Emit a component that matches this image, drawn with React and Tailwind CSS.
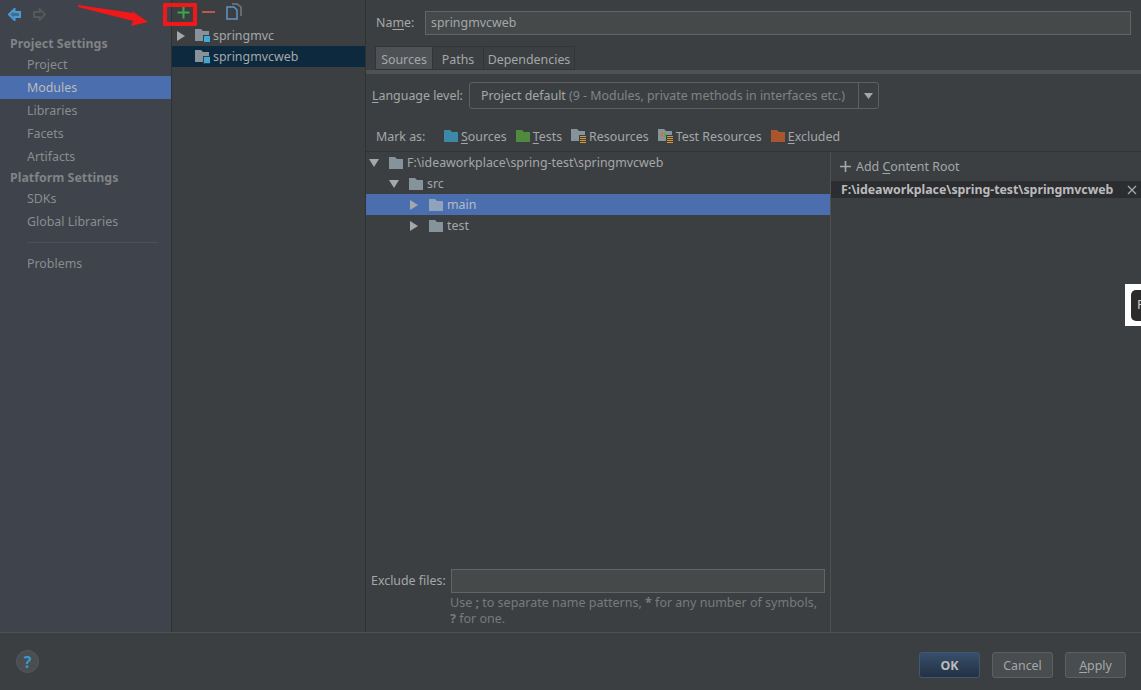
import React from "react";

const font = { fontFamily: '"Noto Sans", "Open Sans", sans-serif' };

function Folder({ color = "#87939a", className = "" }) {
  return (
    <svg width="14" height="12" viewBox="0 0 14 12" className={className}>
      <path d="M0 0h6l2 2h6v10H0z" fill={color} />
    </svg>
  );
}

function ModuleFolder() {
  return (
    <svg width="15" height="14" viewBox="0 0 15 14" className="shrink-0">
      <path d="M0 0h6l2 2h6v10H0z" fill="#87939a" />
      <rect x="8" y="6" width="7" height="8" fill="#3c3f41" />
      <rect x="9" y="7" width="6" height="6" fill="#40a8d8" />
    </svg>
  );
}

function Tri({ down = false, className = "" }) {
  return (
    <svg width="10" height="10" viewBox="0 0 10 10" className={`shrink-0 ${className}`}>
      {down ? <path d="M0 1h10L5 9z" fill="#a3a8ab" /> : <path d="M1 0l8 5-8 5z" fill="#a3a8ab" />}
    </svg>
  );
}

function ResFolder({ test = false }) {
  return (
    <svg width="15" height="14" viewBox="0 0 15 14" className="shrink-0">
      <path d="M0 0h6l2 2h6v10H0z" fill="#87939a" />
      {test && <path d="M2 5l3-2v6z" fill="#d9702f" />}
      {test && <path d="M6 3l3 3-3 3z" fill="#59a84a" />}
      <rect x="8" y="6" width="7" height="8" fill="#3c3f41" />
      <path d="M9 7.5h6M9 9.5h6M9 11.5h6M9 13.5h6" stroke="#d59b3b" strokeWidth="1" />
    </svg>
  );
}

function NavItem({ label, active }) {
  return (
    <div className={`h-[23px] pl-[27px] leading-[23px] ${active ? "bg-[#4b6eaf] text-[#bbbbbb]" : "text-[#8a8d8f]"}`}>
      {label}
    </div>
  );
}

function NavHead({ label }) {
  return <div className="h-[19px] pl-[10px] font-bold leading-[19px] text-[#808386]">{label}</div>;
}

function TreeRow({ pad, down, label, active }) {
  return (
    <div className={`flex h-[21px] items-center ${active ? "bg-[#4b6eaf] text-[#b4bccb]" : "text-[#a4a7a9]"}`} style={{ paddingLeft: pad }}>
      <Tri down={down} className="mr-[10px]" />
      <Folder className="mr-[4px] shrink-0" color={active ? "#8fa3bd" : "#87939a"} />
      <span className="pt-[2px]">{label}</span>
    </div>
  );
}

function MarkItem({ icon, first, rest }) {
  return (
    <div className="flex items-center gap-[3px]">
      {icon}
      <span className="pt-[2px] text-[#a4a7a9]">
        <span className="underline underline-offset-2">{first}</span>
        {rest}
      </span>
    </div>
  );
}

export default function App() {
  return (
    <div className="relative flex h-[690px] w-[1141px] flex-col overflow-hidden whitespace-nowrap bg-[#3c3f41] text-[12.4px]" style={font}>
      <div className="flex h-[633px] border-b border-[#515151]">
        {/* settings nav */}
        <div className="w-[172px] shrink-0 border-r border-[#2f3133] bg-[#3e434c]">
          <div className="flex h-[34px] items-center gap-[12px] pb-[6px] pl-[8px]">
            <svg width="13" height="13" viewBox="0 0 13 13">
              <path d="M6.5 1L1 6.5 6.5 12V9H12V4H6.5z" fill="#3d6f92" stroke="#4a9bd1" strokeWidth="2" />
            </svg>
            <svg width="13" height="13" viewBox="0 0 13 13">
              <path d="M6.5 1L12 6.5 6.5 12V9H1V4h5.5z" fill="none" stroke="#55585a" strokeWidth="2" />
            </svg>
          </div>
          <NavHead label="Project Settings" />
          <NavItem label="Project" />
          <NavItem label="Modules" active />
          <NavItem label="Libraries" />
          <NavItem label="Facets" />
          <NavItem label="Artifacts" />
          <NavHead label="Platform Settings" />
          <NavItem label="SDKs" />
          <NavItem label="Global Libraries" />
          <div className="ml-[27px] mr-[13px] mt-[9px] h-px bg-[#4c5057]" />
          <div className="mt-[9px]">
            <NavItem label="Problems" />
          </div>
        </div>

        {/* module list */}
        <div className="w-[194px] shrink-0 border-r border-[#2f3133]">
          <div className="flex h-[25px] items-center pl-[5px]">
            <svg width="13" height="13" viewBox="0 0 13 13">
              <path d="M6.5 0.5v12M0.5 6.5h12" stroke="#3aa84a" strokeWidth="2" />
            </svg>
            <svg width="13" height="3" viewBox="0 0 13 3" className="ml-[12px]">
              <rect width="13" height="2" fill="#b85a4c" />
            </svg>
            <svg width="16" height="17" viewBox="0 0 16 17" className="ml-[11px] mb-[3px]">
              <path d="M6 1h5l4 3v9" fill="none" stroke="#777b7e" strokeWidth="1.5" />
              <path d="M1 4h7l3 3v9H1z" fill="#3c3f41" stroke="#5e96c4" strokeWidth="1.5" />
            </svg>
          </div>
          <div className="flex h-[21px] items-center pl-[4px] text-[#a4a7a9]">
            <Tri className="mr-[9px]" />
            <ModuleFolder />
            <span className="ml-[3px] pt-[2px]">springmvc</span>
          </div>
          <div className="flex h-[21px] items-center bg-[#0d293e] pl-[23px] text-[#a4a7a9]">
            <ModuleFolder />
            <span className="ml-[3px] pt-[2px]">springmvcweb</span>
          </div>
        </div>

        {/* module details */}
        <div className="flex min-w-0 flex-1 flex-col">
          <div className="flex items-center pl-[10px] pr-[10px] pt-[11px] text-[#a4a7a9]">
            <span className="w-[49px]">
              Na<span className="underline underline-offset-2">m</span>e:
            </span>
            <div className="flex h-[24px] flex-1 items-center border border-[#646464] bg-[#45494a] pl-[5px]">springmvcweb</div>
          </div>

          <div className="mt-[11px] flex h-[24px] pl-[9px] text-[#a4a7a9]">
            <div className="flex w-[57px] items-center justify-center border border-r-0 border-[#323436] bg-[#4e5254] pt-[4px]">Sources</div>
            <div className="flex w-[51px] items-center justify-center border border-r-0 border-[#323436] pt-[4px]">Paths</div>
            <div className="flex w-[92px] items-center justify-center border border-[#323436] pt-[4px]">Dependencies</div>
          </div>
          <div className="h-[4px] bg-[#4e5254]" />

          <div className="mt-[8px] flex items-center pl-[6px] text-[#a4a7a9]">
            <span className="w-[97px] pt-[2px]">
              <span className="underline underline-offset-2">L</span>anguage level:
            </span>
            <div className="flex h-[27px] w-[410px] items-center rounded-[3px] border border-[#5e6060]">
              <div className="flex-1 pl-[11px] pt-[2px]">
                Project default <span className="text-[#808386]">(9 - Modules, private methods in interfaces etc.)</span>
              </div>
              <div className="flex h-full w-[20px] items-center justify-center border-l border-[#5e6060]">
                <svg width="9" height="6" viewBox="0 0 9 6">
                  <path d="M0 0h9L4.5 6z" fill="#a3a8ab" />
                </svg>
              </div>
            </div>
          </div>

          <div className="mt-[17px] flex h-[20px] items-center pl-[10px] text-[#a4a7a9]">
            <span className="w-[68px] pt-[2px]">Mark as:</span>
            <div className="flex gap-[9px]">
              <MarkItem icon={<Folder color="#3d87a7" />} first="S" rest="ources" />
              <MarkItem icon={<Folder color="#4f8a3e" />} first="T" rest="ests" />
              <MarkItem icon={<ResFolder />} first="" rest="Resources" />
              <MarkItem icon={<ResFolder test />} first="" rest="Test Resources" />
              <MarkItem icon={<Folder color="#a9552e" />} first="E" rest="xcluded" />
            </div>
          </div>

          <div className="mt-[5px] flex min-h-0 flex-1 border-t border-[#323436]">
            <div className="flex w-[465px] shrink-0 flex-col border-r border-[#515151]">
              <TreeRow pad={3} down label="F:\ideaworkplace\spring-test\springmvcweb" />
              <TreeRow pad={23} down label="src" />
              <TreeRow pad={43} label="main" active />
              <TreeRow pad={43} label="test" />
              <div className="mt-auto pb-[5px] pl-[5px] pr-[5px]">
                <div className="flex items-center text-[#a4a7a9]">
                  <span className="w-[80px]">Exclude files:</span>
                  <div className="h-[24px] flex-1 border border-[#646464] bg-[#45494a]" />
                </div>
                <div className="mt-[2px] pl-[79px] text-[12.5px] leading-[16px] text-[#787a7c]">
                  Use <b>;</b> to separate name patterns, <b>*</b> for any number of symbols,
                  <br />
                  <b>?</b> for one.
                </div>
              </div>
            </div>
            <div className="min-w-0 flex-1">
              <div className="flex h-[26px] items-center gap-[5px] pl-[9px] pt-[3px] text-[#a4a7a9]">
                <svg width="11" height="11" viewBox="0 0 11 11">
                  <path d="M5.5 0v11M0 5.5h11" stroke="#a3a8ab" strokeWidth="1.6" />
                </svg>
                <span className="pt-[2px]">
                  Add <span className="underline underline-offset-2">C</span>ontent Root
                </span>
              </div>
              <div className="mt-[3px] flex h-[17px] items-center justify-between bg-[#2b2d30] pl-[10px] pr-[4px] font-bold text-[#bbbbbb]">
                <span className="pt-[2px] tracking-[-0.05px]">F:\ideaworkplace\spring-test\springmvcweb</span>
                <svg width="10" height="10" viewBox="0 0 10 10">
                  <path d="M1 1l8 8M9 1l-8 8" stroke="#a3a8ab" strokeWidth="1.3" />
                </svg>
              </div>
            </div>
          </div>
        </div>
      </div>

      {/* footer */}
      <div className="flex flex-1 items-center justify-between pl-[16px] pr-[15px]">
        <div className="flex h-[23px] w-[23px] items-center justify-center rounded-full border border-[#56595b] bg-[#4a4e50] font-bold text-[#3f97cf] text-[16px]">?</div>
        <div className="flex gap-[12px] pt-[7px] text-[#a4a7a9]">
          <div className="flex h-[26px] w-[61px] items-center justify-center rounded-[3px] border border-[#3f5675] bg-gradient-to-b from-[#384f6b] to-[#233143] pt-[2px] font-bold text-[#bbbbbb]">OK</div>
          <div className="flex h-[26px] w-[61px] items-center justify-center rounded-[3px] border border-[#5e6060] bg-[#494d4f] pt-[2px]">Cancel</div>
          <div className="flex h-[26px] w-[61px] items-center justify-center rounded-[3px] border border-[#5e6060] bg-[#494d4f] pt-[2px]">
            <span>
              <span className="underline underline-offset-2">A</span>pply
            </span>
          </div>
        </div>
      </div>

      {/* annotation drawn over the screenshot */}
      <div className="absolute left-[163px] top-[3px] h-[23px] w-[34px] rounded-[1px] border-[4px] border-[#f01818]" />
      <svg width="72" height="22" viewBox="0 0 72 22" className="absolute left-[78px] top-[5px]">
        <path d="M0 0L55 8 54 6 70 17 53 21 55 16 0 2z" fill="#f01818" />
      </svg>

      {/* clipped popup at the right edge */}
      <div className="absolute left-[1125px] top-[284px] flex h-[42px] w-[16px] items-center justify-end overflow-hidden bg-white">
        <div className="flex h-[31px] w-[10px] items-center overflow-hidden rounded-l-[5px] bg-[#2b2b2b] pl-[6px] text-[13px] text-[#cccccc]">P</div>
      </div>
    </div>
  );
}
